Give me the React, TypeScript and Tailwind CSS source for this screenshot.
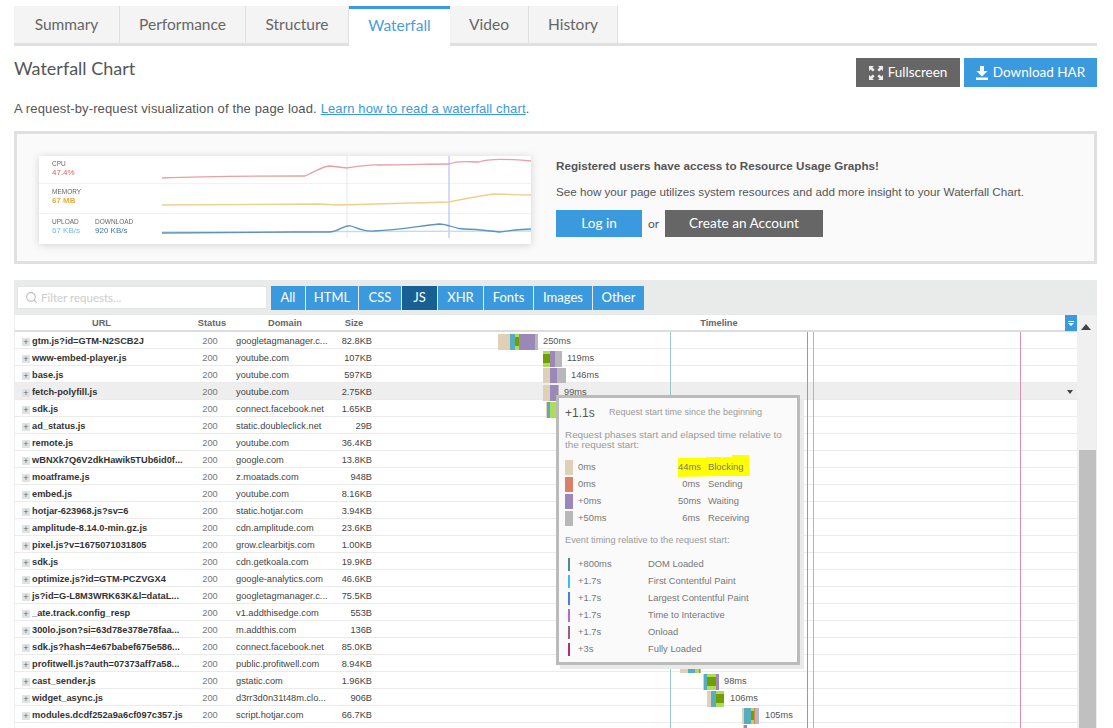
import React from "react";
import { Search } from "lucide-react";

const C = { b: "#e0d0b8", t: "#56adc0", l: "#aedb58", d: "#6f9f00", p: "#9b88b8", g: "#b8b8b8", r: "#d98068" };
type Seg = [number, number, string, boolean?];
type Row = { u: string; d: string; s: string; x?: number; segs?: Seg[]; lx?: number; label?: string };

const rows: Row[] = [
  { u: "gtm.js?id=GTM-N2SCB2J", d: "googletagmanager.c...", s: "82.8KB", x: 498, segs: [[12, 16, C.b], [5, 16, C.t], [4, 16, C.l, true], [16, 16, C.p], [3, 16, C.g]], lx: 5, label: "250ms" },
  { u: "www-embed-player.js", d: "youtube.com", s: "107KB", x: 543, segs: [[7, 16, C.l, true], [5, 16, C.p], [7, 16, C.g]], lx: 5, label: "119ms" },
  { u: "base.js", d: "youtube.com", s: "597KB", x: 543, segs: [[7, 16, C.b], [7, 16, C.p], [9, 16, C.g]], lx: 5, label: "146ms" },
  { u: "fetch-polyfill.js", d: "youtube.com", s: "2.75KB", x: 543, segs: [[7, 16, C.b], [8, 16, C.p], [1, 16, C.g]], lx: 5, label: "99ms" },
  { u: "sdk.js", d: "connect.facebook.net", s: "1.65KB", x: 546, segs: [[1, 16, C.b], [3, 16, C.t], [8, 16, C.l]] },
  { u: "ad_status.js", d: "static.doubleclick.net", s: "29B" },
  { u: "remote.js", d: "youtube.com", s: "36.4KB" },
  { u: "wBNXk7Q6V2dkHawik5TUb6id0f...", d: "google.com", s: "13.8KB" },
  { u: "moatframe.js", d: "z.moatads.com", s: "948B" },
  { u: "embed.js", d: "youtube.com", s: "8.16KB" },
  { u: "hotjar-623968.js?sv=6", d: "static.hotjar.com", s: "3.94KB" },
  { u: "amplitude-8.14.0-min.gz.js", d: "cdn.amplitude.com", s: "23.6KB" },
  { u: "pixel.js?v=1675071031805", d: "grow.clearbitjs.com", s: "1.00KB" },
  { u: "sdk.js", d: "cdn.getkoala.com", s: "19.9KB" },
  { u: "optimize.js?id=GTM-PCZVGX4", d: "google-analytics.com", s: "46.6KB" },
  { u: "js?id=G-L8M3WRK63K&l=dataL...", d: "googletagmanager.c...", s: "75.5KB" },
  { u: "_ate.track.config_resp", d: "v1.addthisedge.com", s: "553B" },
  { u: "300lo.json?si=63d78e378e78faa...", d: "m.addthis.com", s: "136B" },
  { u: "sdk.js?hash=4e67babef675e586...", d: "connect.facebook.net", s: "85.0KB" },
  { u: "profitwell.js?auth=07373aff7a58...", d: "public.profitwell.com", s: "8.94KB", x: 680, segs: [[8, 16, C.b], [7, 16, C.t], [4, 16, C.l, true], [1, 16, C.p], [1, 16, C.g]], lx: 7, label: "102ms" },
  { u: "cast_sender.js", d: "gstatic.com", s: "1.96KB", x: 703, segs: [[1, 16, C.b], [3, 16, C.t], [9, 16, C.l, true], [3, 16, C.p]], lx: 5, label: "98ms" },
  { u: "widget_async.js", d: "d3rr3d0n31t48m.clo...", s: "906B", x: 707, segs: [[4, 16, C.b], [5, 16, C.t], [8, 16, C.l, true]], lx: 6, label: "106ms" },
  { u: "modules.dcdf252a9a6cf097c357.js", d: "script.hotjar.com", s: "66.7KB", x: 742, segs: [[2, 16, C.b], [7, 16, C.t], [3, 16, C.l, true], [1, 16, C.r], [4, 16, C.g]], lx: 6, label: "105ms" },
  { u: "", d: "", s: "", x: 743, segs: [[1, 16, C.b], [3, 16, C.p]] },
];

const filters = [
  ["All", "w-[34px]"], ["HTML", "w-[52px]"], ["CSS", "w-[42px]"], ["JS", "w-[35px]"], ["XHR", "w-[45px]"],
  ["Fonts", "w-[49px]"], ["Images", "w-[58px]"], ["Other", "w-[51px]"],
];
const phases = [
  ["#e0d0b8", "0ms", "44ms", "Blocking"], ["#d98068", "0ms", "0ms", "Sending"],
  ["#9b88b8", "+0ms", "50ms", "Waiting"], ["#b8b8b8", "+50ms", "6ms", "Receiving"],
];
const events = [
  ["#4a8d87", "+800ms", "DOM Loaded"], ["#35bdf2", "+1.7s", "First Contentful Paint"],
  ["#4a7be8", "+1.7s", "Largest Contentful Paint"], ["#b06ccc", "+1.7s", "Time to Interactive"],
  ["#a05a88", "+1.7s", "Onload"], ["#b0306f", "+3s", "Fully Loaded"],
];

function Tabs() {
  const tabs: [string, string][] = [
    ["Summary", "w-[106px]"], ["Performance", "w-[126px]"], ["Structure", "w-[103px]"], ["Waterfall", "w-[101px]"],
    ["Video", "w-[79px]"], ["History", "w-[89px]"],
  ];
  return (
    <div className="flex h-[40px] pl-[14px]">
      {tabs.map(([t, w]) =>
        t === "Waterfall" ? (
          <div key={t} className={`${w} flex items-center justify-center bg-white border-t-[3px] border-[#3b99dd] pb-[3px] text-[#4a9de0]`}>{t}</div>
        ) : (
          <div key={t} className={`${w} flex items-center justify-center bg-[#f4f4f4] border-b-[3px] border-r border-r-[#e0e0e0] border-b-[#e0e0e0] text-[#666]`}>{t}</div>
        )
      )}
      <div className="flex-1 mr-[16px] border-b-[3px] border-[#e0e0e0]" />
    </div>
  );
}

function ChartCard() {
  return (
    <div className="relative w-[492px] h-[88px] bg-white shadow-[0_1px_8px_rgba(0,0,0,0.16)] text-[6.5px] leading-[9px] text-[#666]">
      <div className="h-[28px] pl-[13px] pt-[3px] border-b border-[#f2f2f2]">
        <div>CPU</div>
        <div className="text-[8px] text-[#d9626a]">47.4%</div>
      </div>
      <div className="h-[30px] pl-[13px] pt-[3px] border-b border-[#f2f2f2]">
        <div>MEMORY</div>
        <div className="text-[8px] font-bold text-[#e8ac45]">67 MB</div>
      </div>
      <div className="flex gap-[15px] pl-[13px] pt-[3px]">
        <div>
          <div>UPLOAD</div>
          <div className="text-[8px] text-[#74b8ec]">67 KB/s</div>
        </div>
        <div>
          <div>DOWNLOAD</div>
          <div className="text-[8px] text-[#3d78a8]">920 KB/s</div>
        </div>
      </div>
      <svg className="absolute inset-0" width="492" height="88" viewBox="0 0 492 88" fill="none">
        <line x1="308" y1="0" x2="308" y2="82" stroke="#e6e6e6" />
        <line x1="410" y1="0" x2="410" y2="82" stroke="#b0b0f4" />
        <path d="M123 22 C170 20 210 20 266 20 C280 14 284 10 291 10 L308 12 C320 10 330 8 340 9 C370 9 390 8 410 8 C420 4 430 6 440 6 C450 2 470 3 492 5" stroke="#e8a0a4" strokeWidth="1.3" />
        <path d="M123 49 L280 48 L300 49 L410 46 C430 42 440 40 455 38 C470 38 480 39 492 39" stroke="#efcf8e" strokeWidth="1.3" />
        <path d="M123 76 L492 75" stroke="#bcdcf4" strokeWidth="1.3" />
        <path d="M123 77 L255 76 L290 76 C300 76 305 68 312 70 C318 72 325 76 335 75 C360 74 380 70 400 68 C410 68 415 73 425 73 C440 73 450 75 460 76 C470 75 480 73 492 73" stroke="#5f93ba" strokeWidth="1.3" />
      </svg>
    </div>
  );
}

function Tooltip() {
  return (
    <div className="absolute left-[556px] top-[395px] w-[244px] h-[270px] z-20 bg-[#fafafa] border-[3px] border-[#bbbbbb] shadow-[4px_4px_0_#eaeaea] pl-[6px] text-[9.4px] text-[#777]" style={{ fontFamily: '"Liberation Sans", Arial, sans-serif' }}>
      <svg className="absolute left-[119px] top-[57px]" width="72" height="23" viewBox="0 0 72 23">
        <path d="M0 3 L28 3 L28 2 L54 2 L54 0 L71 0 L72 21 L40 21 L0 22 Z" fill="#ffff00" />
      </svg>
      <div className="relative flex items-center h-[29px]">
        <span className="w-[44px] text-[12px] text-[#555]">+1.1s</span>
        <span className="text-[9px] text-[#999]">Request start time since the beginning</span>
      </div>
      <div className="relative text-[9.9px] text-[#999] leading-[10px] mt-[3px] w-[225px]">Request phases start and elapsed time relative to the request start:</div>
      <div className="relative mt-[9px] flex flex-col">
        {phases.map(([c, a, b, l]) => (
          <div key={l} className="flex items-center h-[17px]">
            <span className="w-[8px] h-[15px] mr-[5px]" style={{ backgroundColor: c }} />
            <span className="w-[100px]">{a}</span>
            <span className="w-[22px] text-right mr-[8px]">{b}</span>
            <span>{l}</span>
          </div>
        ))}
      </div>
      <div className="relative text-[9.2px] text-[#999] mt-[7px]">Event timing relative to the request start:</div>
      <div className="relative mt-[8px] flex flex-col">
        {events.map(([c, a, l]) => (
          <div key={l} className="flex items-center h-[17px]">
            <span className="w-[2px] h-[13px] ml-[3px] mr-[8px]" style={{ backgroundColor: c }} />
            <span className="w-[70px]">{a}</span>
            <span>{l}</span>
          </div>
        ))}
      </div>
    </div>
  );
}

function TableRow({ r, i }: { r: Row; i: number }) {
  const hover = i === 3;
  return (
    <div className={`relative flex items-center h-[17px] border-b border-[#ebebeb] text-[9.25px] pt-[3px] ${hover ? "bg-[#eeeeee]" : ""}`}>
      {r.u && (
        <span className="w-[8px] h-[8px] ml-[7px] mr-[2px] bg-[#e2e2e2] text-[#666] text-[9px] leading-[8px] text-center">+</span>
      )}
      <span className={`${r.u ? "w-[166px]" : "w-[183px]"} font-bold text-[#333] whitespace-nowrap`}>{r.u}</span>
      <span className="w-[24px] text-[#777] text-center">{r.u ? "200" : ""}</span>
      <span className="w-[100px] ml-[14px] text-[#444] whitespace-nowrap">{r.d}</span>
      <span className="w-[36px] text-right text-[#444]">{r.s}</span>
      <div className="flex items-center h-full" style={{ marginLeft: (r.x ?? 380) - 372 }}>
        {r.segs?.map(([w, h, c, inner], k) => (
          <span key={k} className="relative flex items-center shrink-0" style={{ width: w, height: h, backgroundColor: c }}>
            {inner && <span className="block w-full h-[9px] bg-[#6f9f00]" />}
          </span>
        ))}
        {r.label && <span className="text-[#555]" style={{ marginLeft: r.lx }}>{r.label}</span>}
      </div>
      {hover && (
        <svg className="absolute right-[4px] top-[7px]" width="6" height="4" viewBox="0 0 6 4"><path d="M0 0H6L3 4Z" fill="#444" /></svg>
      )}
    </div>
  );
}

export default function App() {
  return (
    <div className="relative w-[1113px] h-[728px] overflow-hidden bg-white pt-[6px]" style={{ fontFamily: 'Lato, "Noto Sans", sans-serif' }}>
      <div className="text-[15.5px]"><Tabs /></div>

      <div className="flex justify-between items-start pl-[14px] pr-[16px] mt-[12px]">
        <h1 className="text-[18px] leading-[20px] text-[#555]">Waterfall Chart</h1>
        <div className="flex gap-[4px] text-[13.5px] text-white">
          <button className="w-[104px] h-[29px] bg-[#666666] flex items-center justify-center gap-[5px]">
            <svg width="14" height="14" viewBox="0 0 14 14" fill="#eee">
              <path d="M0 0H5L3.4 1.6 5.6 3.8 3.8 5.6 1.6 3.4 0 5ZM14 0V5L12.4 3.4 10.2 5.6 8.4 3.8 10.6 1.6 9 0ZM0 14V9L1.6 10.6 3.8 8.4 5.6 10.2 3.4 12.4 5 14ZM14 14H9L10.6 12.4 8.4 10.2 10.2 8.4 12.4 10.6 14 9Z" />
            </svg>
            Fullscreen
          </button>
          <button className="w-[133px] h-[29px] bg-[#3b99dd] flex items-center justify-center gap-[5px]">
            <svg width="12" height="14" viewBox="0 0 12 14" fill="#fff">
              <path d="M4 0H8V5H11.5L6 10.5 .5 5H4ZM0 11.5H12V14H0Z" />
            </svg>
            Download HAR
          </button>
        </div>
      </div>

      <p className="pl-[14px] mt-[13px] text-[13px] leading-[18px] text-[#555]" style={{ fontFamily: '"Liberation Sans", Arial, sans-serif', letterSpacing: "0.14px" }}>
        A request-by-request visualization of the page load.{" "}
        <span className="text-[#3b99dd] underline">Learn how to read a waterfall chart</span>.
      </p>

      <div className="flex items-center ml-[14px] mr-[16px] mt-[13px] h-[133px] border-[3px] border-[#e0e0e0] bg-[#fafafa] pl-[22px]" style={{ fontFamily: '"Liberation Sans", Arial, sans-serif' }}>
        <div className="blur-[0.3px] mt-[4px]"><ChartCard /></div>
        <div className="ml-[25px] text-[11.65px] text-[#555]">
          <div className="font-bold leading-[16px]">Registered users have access to Resource Usage Graphs!</div>
          <div className="mt-[10px] leading-[16px]">See how your page utilizes system resources and add more insight to your Waterfall Chart.</div>
          <div className="mt-[10px] flex items-center text-[13.6px]" style={{ fontFamily: 'Lato, sans-serif' }}>
            <button className="w-[86px] h-[27px] bg-[#3b99dd] text-white">Log in</button>
            <span className="w-[23px] text-center text-[12px]">or</span>
            <button className="w-[158px] h-[27px] bg-[#666666] text-white">Create an Account</button>
          </div>
        </div>
      </div>

      <div className="ml-[14px] mr-[16px] mt-[16px] h-[35px] bg-[#e9eaea] flex items-start pl-[3px] pt-[6px]">
        <div className="w-[250px] h-[23px] bg-white border border-[#e4e4e4] flex items-center pl-[7px] gap-[3px] text-[11.5px] text-[#ccc]">
          <Search size={13} color="#bbbbbb" />
          <span>Filter requests...</span>
        </div>
        <div className="flex ml-[4px] gap-[1px] text-[13px] text-white">
          {filters.map(([f, w]) => (
            <div key={f} className={`${w} h-[24px] flex items-center justify-center ${f === "JS" ? "bg-[#186093]" : "bg-[#3b99dd]"}`}>{f}</div>
          ))}
        </div>
      </div>

      <div className="relative flex ml-[14px] mr-[16px]" style={{ fontFamily: '"Liberation Sans", Arial, sans-serif' }}>
        <div className="flex-1 border-l border-[#eeeeee] min-w-0">
          <div className="relative flex items-center h-[17px] pt-[2px] border-b-2 border-[#dddddd] text-[9.25px] font-bold text-[#666]">
            <span className="w-[173px] text-center">URL</span>
            <span className="w-[44px] text-center ml-[2px]">Status</span>
            <span className="w-[100px] text-center ml-[1px]">Domain</span>
            <span className="w-[30px] text-center ml-[4px]">Size</span>
            <span className="w-[700px] text-center">Timeline</span>
            <span className="absolute right-0 top-0 w-[12px] h-[16px] bg-[#3b99dd] flex items-center justify-center">
              <svg width="6" height="5" viewBox="0 0 6 5"><path d="M0 0H6V1H0ZM0 2H6L3 5Z" fill="#fff" /></svg>
            </span>
          </div>
          {rows.map((r, i) => <TableRow key={i} r={r} i={i} />)}
        </div>
        <div className="w-[20px] bg-[#f0f0f0] relative shrink-0">
          <svg className="absolute left-[4px] top-[9px]" width="10" height="6" viewBox="0 0 10 6"><path d="M0 6L5 0 10 6Z" fill="#444" /></svg>
          <div className="absolute left-[2px] top-[135px] w-[17px] h-[300px] bg-[#c0c0c0]" />
        </div>
        <div className="absolute left-[656px] top-[17px] bottom-0 w-px bg-[#9cc8c4] z-10" />
        <div className="absolute left-[793px] top-[17px] bottom-0 w-px bg-[#9b90d8] z-10" />
        <div className="absolute left-[799px] top-[17px] bottom-0 w-px bg-[#c9a8c0] z-10" />
        <div className="absolute left-[1006px] top-[17px] bottom-0 w-px bg-[#dd8fb4] z-10" />
      </div>
      <Tooltip />
    </div>
  );
}
